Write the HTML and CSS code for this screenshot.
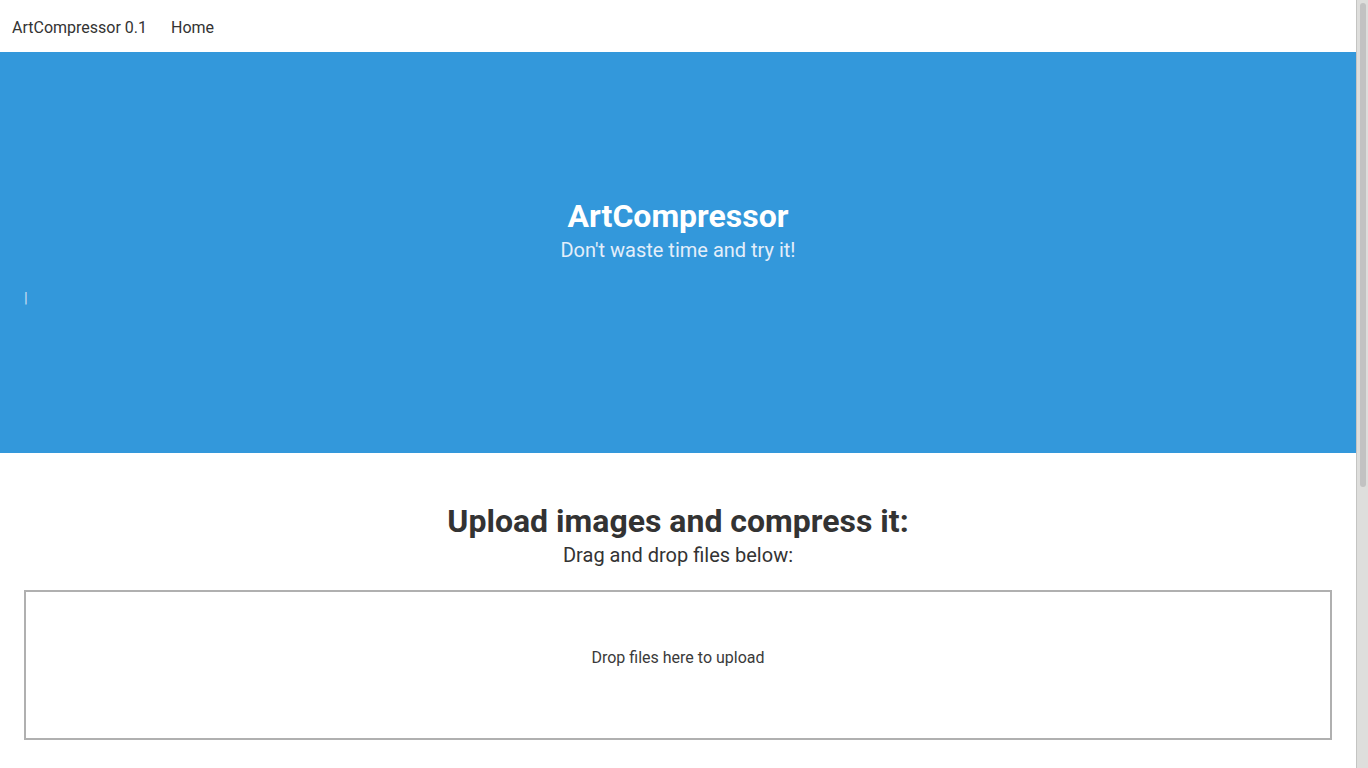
FILE: index.html
```html
<!DOCTYPE html>
<html lang="en">
<head>
  <meta charset="UTF-8">
  <meta name="viewport" content="width=device-width, initial-scale=1.0">
  <title>ArtCompressor</title>
  <link rel="stylesheet" href="styles.css">
</head>
<body>
  <nav class="navbar">
    <a class="brand" href="#">ArtCompressor 0.1</a>
    <a class="nav-link" href="#">Home</a>
  </nav>

  <header class="hero">
    <h1 class="hero-title">ArtCompressor</h1>
    <p class="hero-lead">Don't waste time and try it!</p>
    <span class="hero-caret">|</span>
  </header>

  <main class="upload">
    <h2 class="upload-title">Upload images and compress it:</h2>
    <p class="upload-lead">Drag and drop files below:</p>
    <form class="dropzone" id="dropzone">
      <div class="dz-message">Drop files here to upload</div>
    </form>
  </main>

  <div class="scrollbar"><div class="scrollbar-thumb"></div></div>
</body>
</html>
```

FILE: styles.css
```css
body {
  font-family: Roboto, "Liberation Sans", sans-serif;
  margin: 0;
  padding: 0 12px 0 0;
  color: #333;
  background-color: #ffffff;
}
a {
  color: #333;
  text-decoration: none;
}
.navbar {
  box-sizing: border-box;
  height: 52px;
  display: flex;
  align-items: center;
  padding: 2px 12px 0;
  gap: 24px;
  font-size: 16px;
}
.hero {
  box-sizing: border-box;
  height: 401px;
  padding: 145px 24px 0;
  background-color: #3398db;
  color: white;
  text-align: center;
}
.hero-title {
  margin: 0;
  font-size: 32px;
  line-height: 38px;
  font-weight: 700;
}
.hero-lead {
  margin: 3px 0 0;
  font-size: 20px;
  line-height: 24px;
  color: #e3eefa;
}
.hero-caret {
  display: block;
  text-align: left;
  margin-top: 27px;
  font-size: 15px;
  line-height: 18px;
  color: #cfe0f2;
}
.upload {
  padding: 49px 24px 460px;
  text-align: center;
}
.upload-title {
  margin: 0;
  font-size: 32px;
  line-height: 38px;
  font-weight: 700;
}
.upload-lead {
  margin: 3px 0 23px;
  font-size: 20px;
  line-height: 24px;
}
.dropzone {
  box-sizing: border-box;
  height: 150px;
  border: 2px solid #b0b0b0;
  padding-top: 56px;
}
.dz-message {
  font-size: 16px;
  line-height: 20px;
  color: #3a3a3a;
}
.scrollbar {
  position: fixed;
  top: 0;
  right: 0;
  width: 11px;
  height: 100vh;
  border-left: 1px solid #c4c4c2;
  background-color: #dededc;
}
.scrollbar-thumb {
  width: 6px;
  height: 484px;
  margin: 3px 0 0 3px;
  border-radius: 3px;
  background-color: #c2c2c2;
}
```
